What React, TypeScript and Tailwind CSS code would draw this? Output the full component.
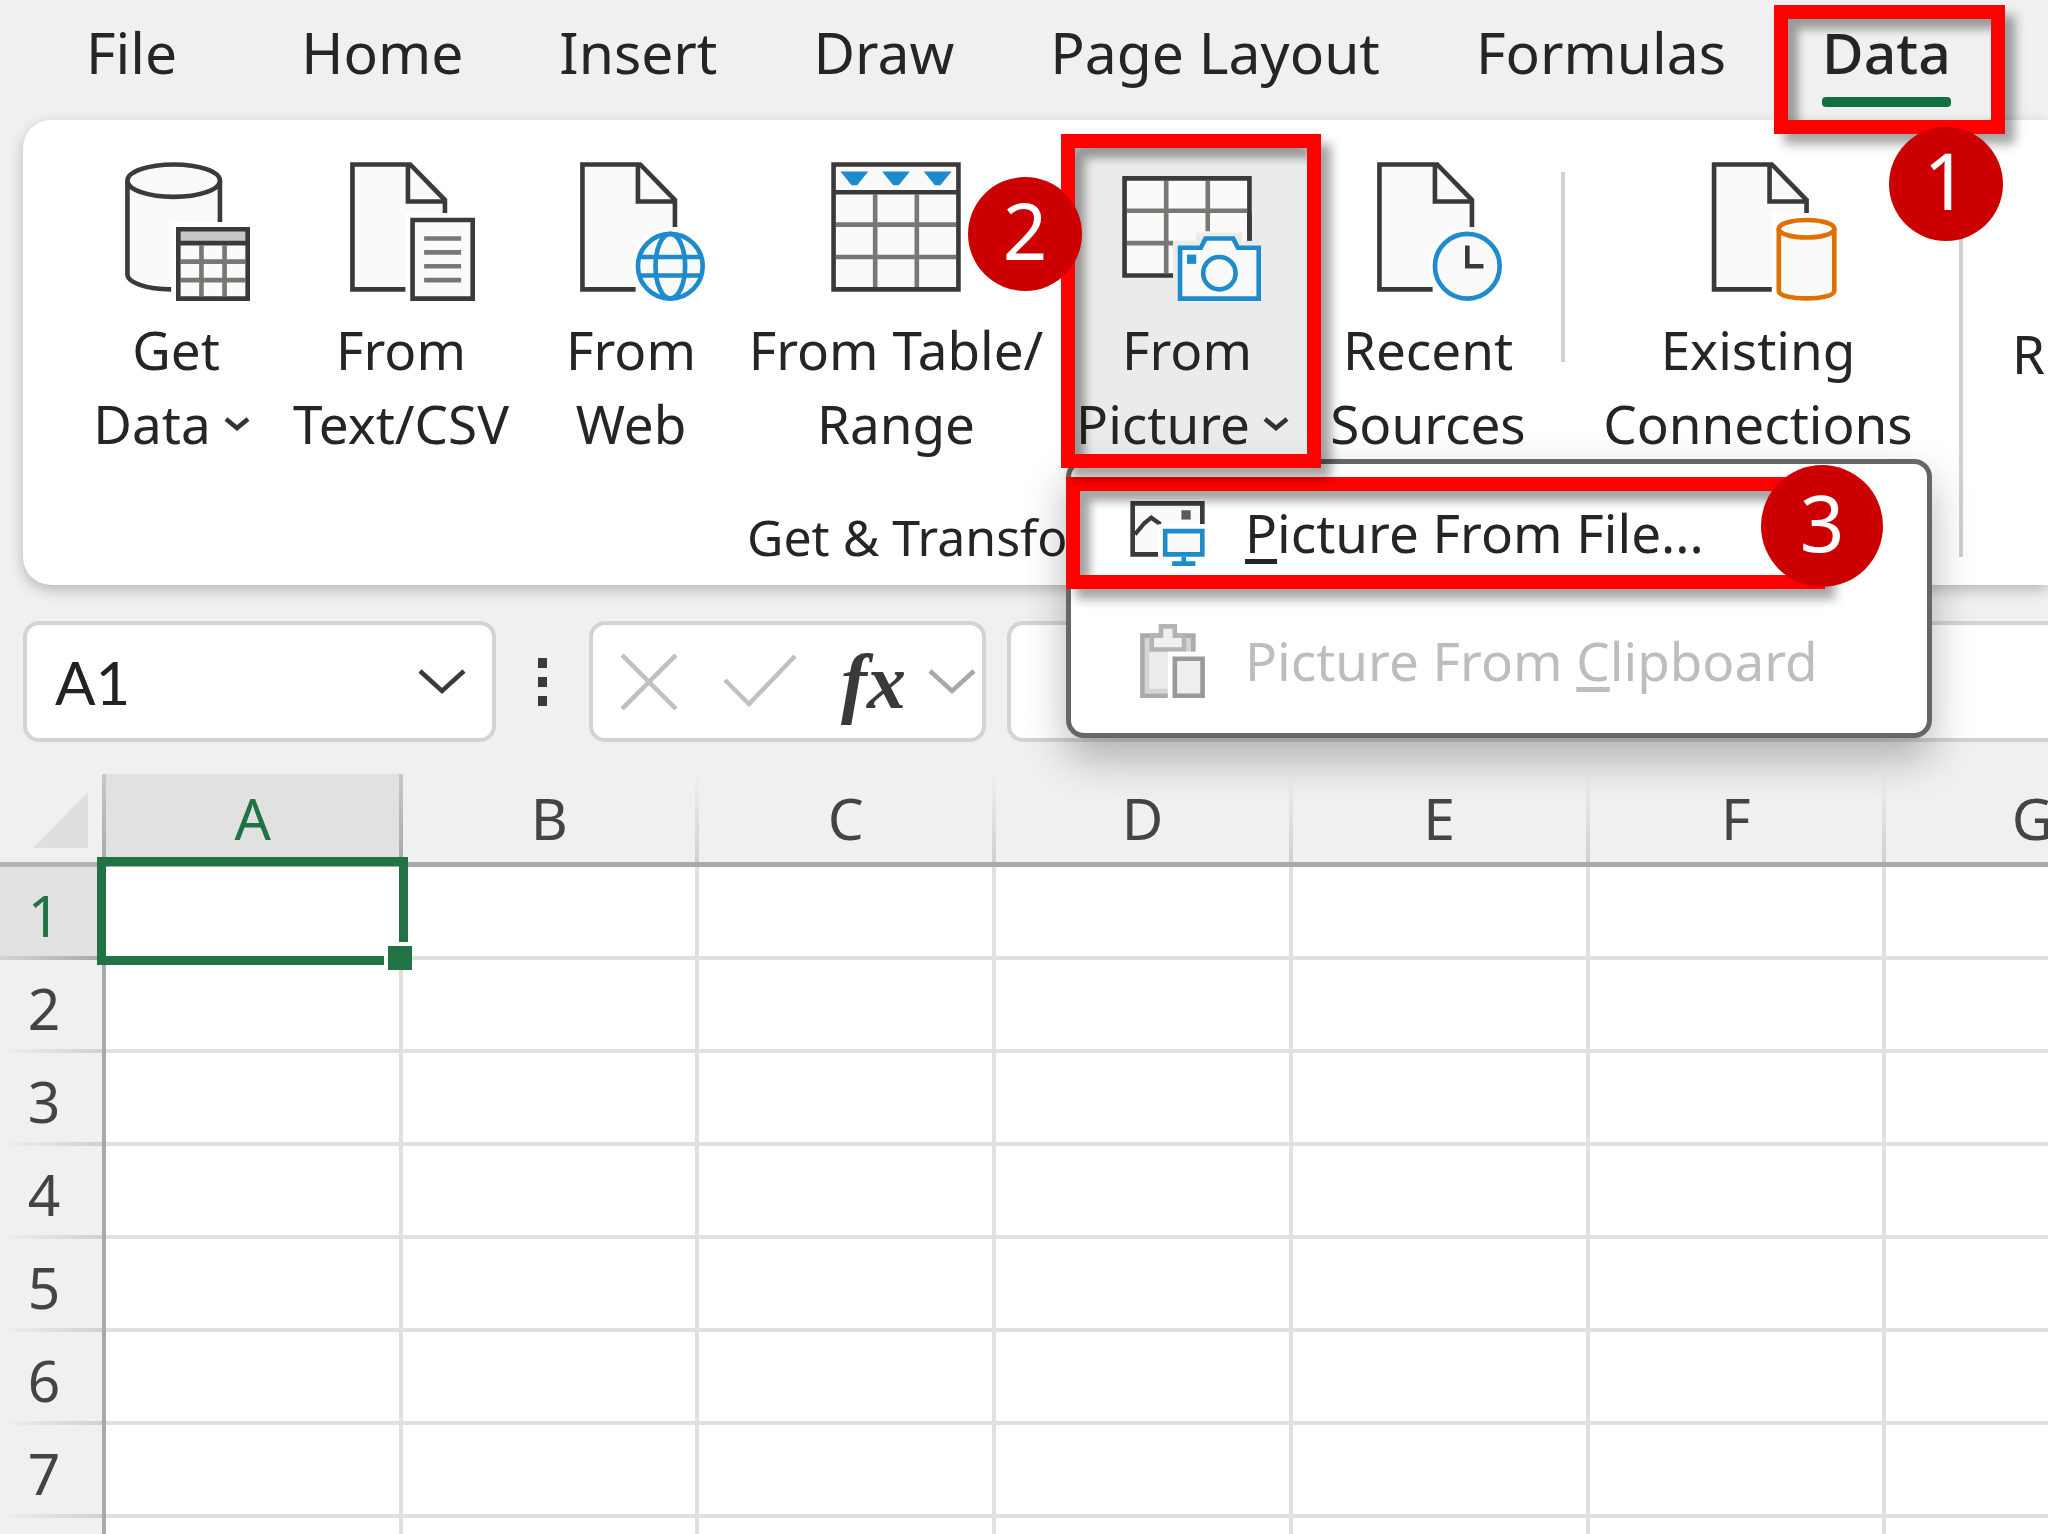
import type { ReactNode } from "react";

const INK = "#3b3a38";
const SOFT = "#797774";
const PAPER = "#fafafa";
const BLUE = "#1e8bcd";
const ORANGE = "#e07000";

function RibbonIcon({ children, viewBox = "0 0 32 30" }: { children?: ReactNode; viewBox?: string }) {
  return (
    <svg
      viewBox={viewBox}
      className="h-[139px] w-[148px] shrink-0 overflow-visible"
      fill="none"
      aria-hidden="true"
    >
      {children}
    </svg>
  );
}

function Sheet({ cutX, cutY }: { cutX: number; cutY: number }) {
  return (
    <>
      <path d="M5.5 .5H18L25.5 8.5V27.5H5.5Z" fill={PAPER} />
      <path d={`M${cutX} 27.5H5.5V.5H18L25.5 8.2V${cutY}`} stroke={INK} />
      <path d="M17.5 .5V8.5H25.5" stroke={INK} />
    </>
  );
}

function GetDataIcon() {
  return (
    <RibbonIcon>
      <path d="M5.5 4V24.5C5.5 26.2 10 27.5 15 27.5H25.5V4Z" fill={PAPER} />
      <path d="M5.5 4V24.3C5.5 26 9.5 27.5 15 27.5M25.5 4V13" stroke={INK} />
      <ellipse cx="15.5" cy="4" rx="10" ry="3.5" fill={PAPER} stroke={INK} />
      <path d="M15 13H32V30H15Z" fill="#fff" />
      <path d="M16.5 14.5H31.5V29.5H16.5Z" fill={PAPER} />
      <path d="M16.5 14.5H31.5V17.5H16.5Z" fill="#c8c6c4" />
      <path d="M21.5 18V29M26.5 18V29M17 21.5H31M17 25.5H31" stroke={SOFT} />
      <path d="M16.5 14.5H31.5V29.5H16.5ZM16.5 17.5H31.5" stroke={INK} />
    </RibbonIcon>
  );
}

function TextCsvIcon() {
  return (
    <RibbonIcon>
      <Sheet cutX={17} cutY={11} />
      <path d="M17 11H32V30H17Z" fill="#fff" />
      <path d="M18.5 12.5H31.5V29.5H18.5Z" fill={PAPER} stroke={INK} />
      <path d="M21 16.5H29M21 19.5H29M21 22.5H29M21 25.5H29" stroke={SOFT} />
    </RibbonIcon>
  );
}

function WebIcon() {
  return (
    <RibbonIcon>
      <Sheet cutX={17} cutY={14} />
      <circle cx="24.5" cy="22.5" r="8.3" fill="#fff" />
      <circle cx="24.5" cy="22.5" r="7" fill={PAPER} stroke={BLUE} />
      <ellipse cx="24.5" cy="22.5" rx="3.2" ry="7" stroke={BLUE} />
      <path d="M18 20.5H31M18 24.5H31" stroke={BLUE} />
    </RibbonIcon>
  );
}

function TableIcon() {
  return (
    <RibbonIcon>
      <path d="M2.5 .5H29.5V27.5H2.5Z" fill={PAPER} />
      <path d="M11.5 7V27M20.5 7V27M3 13.5H29M3 20.5H29" stroke={SOFT} />
      <path d="M2.5 .5H29.5V27.5H2.5ZM2.5 6.5H29.5" stroke={INK} />
      <path d="M4 2H10L7.6 5H6.4ZM13 2H19L16.6 5H15.4ZM22 2H28L25.6 5H24.4Z" fill={BLUE} />
    </RibbonIcon>
  );
}

function PictureIcon() {
  return (
    <RibbonIcon viewBox="-1 0 32 30">
      <path d="M1.5 3.5H28.5V24.5H1.5Z" fill={PAPER} />
      <path d="M10.5 4V24M19.5 4V15M2 10.5H28M2 17.5H12" stroke={SOFT} />
      <path d="M12 24.5H1.5V3.5H28.5V17" stroke={INK} />
      <path d="M12 17H17V15.2H27V17H31V30H12Z" fill="#ebebeb" />
      <path d="M17 15.2H27V17H28V12H20V15H17Z" fill={PAPER} />
      <path d="M28.5 11V17" stroke={INK} />
      <path d="M13.5 18.5H18L19 16.5H25L26 18.5H30.5V29.5H13.5Z" fill={PAPER} stroke={BLUE} />
      <circle cx="22" cy="24" r="3.5" stroke={BLUE} />
      <path d="M15 20H17V22H15Z" fill={BLUE} />
    </RibbonIcon>
  );
}

function RecentIcon() {
  return (
    <RibbonIcon>
      <Sheet cutX={17} cutY={14} />
      <circle cx="24.5" cy="22.5" r="8.3" fill="#fff" />
      <circle cx="24.5" cy="22.5" r="7" fill={PAPER} stroke={BLUE} />
      <path d="M24.5 18V22.5H28" stroke={INK} />
    </RibbonIcon>
  );
}

function ConnectionsIcon() {
  return (
    <RibbonIcon viewBox="-1 0 32 30">
      <Sheet cutX={18} cutY={11} />
      <path d="M18 11H32V30H18Z" fill="#fff" />
      <path d="M19.5 14.3V27.8C19.5 30 31.5 30 31.5 27.8V14.3" fill={PAPER} stroke={ORANGE} />
      <ellipse cx="25.5" cy="14.4" rx="6" ry="1.9" fill="#fff" stroke={ORANGE} />
    </RibbonIcon>
  );
}

function FileMenuIcon() {
  return (
    <svg viewBox="0 0 16 14" className="h-[65px] w-[75px] shrink-0" fill="none" aria-hidden="true">
      <path d="M.5 .5H15.5V11.5H.5Z" fill={PAPER} />
      <path d="M6 11.5H.5V.5H15.5V5" stroke={INK} />
      <path d="M1 7.2L3 4.8L4.5 3.6L6.5 5" stroke={INK} strokeWidth=".9" />
      <path d="M11 2H13V4H11Z" fill="#5a5a5a" />
      <path d="M6 5H16V12H6Z" fill="#fff" />
      <path d="M7.5 6.5H15.5V11.5H7.5Z" fill={PAPER} stroke={BLUE} />
      <path d="M11.5 12V13.5M9 13.5H14" stroke={BLUE} />
    </svg>
  );
}

function ClipboardMenuIcon() {
  return (
    <svg viewBox="0 0 14 16" className="h-[74px] w-[65px] shrink-0" fill="none" aria-hidden="true">
      <path d="M.5 2.5H11.5V15.5H.5Z" fill="#ececec" />
      <path d="M1.5 3V14.5H6M10.5 3V6" stroke="#d4d4d4" />
      <path d="M6 15.5H.5V2.5H11.5V6" stroke="#ababab" />
      <path d="M2.5 2.5H4.5V.5H7.5V2.5H9.5V5.5H2.5Z" fill="#f0f0f0" stroke="#b4b4b4" />
      <path d="M6 6H14V16H6Z" fill="#fff" />
      <path d="M7.5 7.5H13.5V15.5H7.5Z" fill="#eeeeee" stroke="#999999" />
    </svg>
  );
}

function SmallCaret() {
  return (
    <svg viewBox="0 0 28 16" className="mr-2 h-4 w-7 shrink-0" fill="none" aria-hidden="true">
      <path d="M3 3L14 12L25 3" stroke="#333" strokeWidth="4.5" />
    </svg>
  );
}

function Caret({ color }: { color: string }) {
  return (
    <svg viewBox="0 0 50 26" className="h-[26px] w-[50px] shrink-0" fill="none" aria-hidden="true">
      <path d="M3 2L25 22L47 2" stroke={color} strokeWidth="4.5" />
    </svg>
  );
}

const BOX =
  "pointer-events-none absolute border-14 border-[#ff0000] shadow-[10px_10px_10px_rgba(0,0,0,0.36),inset_10px_10px_10px_rgba(0,0,0,0.36)]";
const BADGE =
  "pointer-events-none absolute flex items-center justify-center rounded-full bg-[#cc0000] pb-2 text-[78px] leading-none text-white";

function RibbonButton({
  icon,
  lines,
  caret,
  className,
}: {
  icon: ReactNode;
  lines: [string, string];
  caret?: boolean;
  className: string;
}) {
  return (
    <button
      type="button"
      className={`flex shrink-0 flex-col items-center pt-[14px] text-[53px] leading-[74px] whitespace-nowrap ${className}`}
    >
      {icon}
      <span className="mt-3">{lines[0]}</span>
      <span className="flex items-center gap-3">
        {lines[1]}
        {caret && <SmallCaret />}
      </span>
    </button>
  );
}

function Tabs() {
  const tabs = ["File", "Home", "Insert", "Draw", "Page Layout", "Formulas"];
  return (
    <nav className="relative z-30 flex h-[120px] items-start pt-[13px] pl-[38px] text-[57px] leading-[78px] whitespace-nowrap">
      {tabs.map((t) => (
        <button key={t} type="button" className="shrink-0 px-12 first:mr-7">
          {t}
        </button>
      ))}
      <button type="button" aria-current="page" className="relative shrink-0 px-12">
        <span className="font-medium">Data</span>
        <span className="absolute inset-x-12 top-[84px] h-[10px] rounded-sm bg-[#107040]" />
        <span className={`${BOX} -top-2 -right-[6px] left-0 h-[129px]`} />
        <span className={`${BADGE} top-[114px] -right-1 size-[114px]`}>1</span>
      </button>
    </nav>
  );
}

function PictureMenu() {
  return (
    <div className="absolute top-[311px] -left-[9px] w-[866px] rounded-[18px] border-[5px] border-[#666] bg-white pb-5 text-[53px] leading-[74px] whitespace-nowrap shadow-[0_20px_44px_rgba(0,0,0,0.28)]">
      <div className="relative mt-[13px]">
        <button type="button" className="flex h-28 w-full items-center gap-10 pl-[59px]">
          <FileMenuIcon />
          <span>
            <span className="underline decoration-[5px] underline-offset-[6px]">P</span>icture From File...
          </span>
        </button>
        <span className={`${BOX} -inset-y-0 right-[102px] -left-[5px]`} />
        <span className={`${BADGE} -top-3 right-11 size-[122px]`}>3</span>
      </div>
      <button type="button" disabled className="mt-5 flex h-[104px] w-full items-center gap-10 pl-[69px] text-[#bdbdbd]">
        <ClipboardMenuIcon />
        <span>
          Picture From{" "}
          <span className="underline decoration-[5px] underline-offset-[6px] [text-decoration-skip-ink:none]">C</span>
          lipboard
        </span>
      </button>
    </div>
  );
}

function Ribbon() {
  return (
    <section className="relative z-20 ml-[23px] flex rounded-l-[28px] bg-white pt-7 pb-[14px] pl-[53px] shadow-[0_5px_14px_rgba(0,0,0,0.24)]">
      <div className="flex shrink-0 flex-col">
        <div className="flex">
          <RibbonButton icon={<GetDataIcon />} lines={["Get", "Data"]} caret className="w-[200px]" />
          <RibbonButton icon={<TextCsvIcon />} lines={["From", "Text/CSV"]} className="w-[250px]" />
          <RibbonButton icon={<WebIcon />} lines={["From", "Web"]} className="w-[210px]" />
          <RibbonButton icon={<TableIcon />} lines={["From Table/", "Range"]} className="w-[320px]" />
          <div className="relative z-10 ml-[19px] shrink-0">
            <RibbonButton
              icon={<PictureIcon />}
              lines={["From", "Picture"]}
              caret
              className="w-[232px] rounded-xl bg-[#ebebeb] pr-2"
            />
            <PictureMenu />
            <span className={`${BOX} -inset-x-[14px] -top-[14px] -bottom-[7px]`} />
            <span className={`${BADGE} top-[29px] -left-[107px] size-[114px]`}>2</span>
          </div>
          <RibbonButton icon={<RecentIcon />} lines={["Recent", "Sources"]} className="w-[242px]" />
          <span className="mt-6 ml-3 h-[190px] w-1 shrink-0 bg-[#d0d0d0]" />
          <RibbonButton icon={<ConnectionsIcon />} lines={["Existing", "Connections"]} className="w-[386px]" />
        </div>
        <span className="mt-[42px] pl-[671px] text-[50px] leading-[68px] whitespace-nowrap">
          Get &amp; Transform Data
        </span>
      </div>
      <span className="mt-6 mb-[14px] ml-2 w-1 shrink-0 bg-[#d0d0d0]" />
      <RibbonButton icon={<RibbonIcon />} lines={["Refresh", "All"]} caret className="mt-1 ml-10 w-[208px]" />
    </section>
  );
}

const FIELD = "flex h-[121px] shrink-0 items-center rounded-2xl border-4 border-[#d3d3d3] bg-white";

function FormulaBar() {
  return (
    <div className="mt-9 flex items-center pl-[23px]">
      <div className={`${FIELD} w-[473px] pr-[25px] pl-7`}>
        <input
          aria-label="Name box"
          defaultValue="A1"
          className="w-0 flex-1 bg-transparent font-[Lato] text-[60px] leading-none text-[#222] outline-none"
        />
        <button type="button" aria-label="Name list">
          <Caret color="#3b3a38" />
        </button>
      </div>
      <span className="mx-[42px] flex flex-col gap-[9px]">
        <i className="h-[10px] w-[9px] bg-[#3b3a38]" />
        <i className="h-[10px] w-[9px] bg-[#3b3a38]" />
        <i className="h-[10px] w-[9px] bg-[#3b3a38]" />
      </span>
      <div className={`${FIELD} w-[397px] pl-7`}>
        <button type="button" aria-label="Cancel">
          <svg viewBox="0 0 56 56" className="size-14" fill="none">
            <path d="M1 1L55 55M55 1L1 55" stroke="#c0c0c0" strokeWidth="4.5" />
          </svg>
        </button>
        <button type="button" aria-label="Enter" className="ml-[46px]">
          <svg viewBox="0 0 74 56" className="h-14 w-[74px]" fill="none">
            <path d="M2 26L26 50L72 2" stroke="#c0c0c0" strokeWidth="4.5" />
          </svg>
        </button>
        <button
          type="button"
          className="ml-11 font-['Liberation_Serif'] text-[78px] leading-none font-bold text-[#3b3a38] italic"
        >
          fx
        </button>
        <button type="button" aria-label="Function list" className="ml-[21px]">
          <Caret color="#a8a8a8" />
        </button>
      </div>
      <input
        aria-label="Formula"
        className="ml-[21px] h-[121px] flex-1 rounded-l-2xl border-4 border-r-0 border-[#d3d3d3] bg-white px-6 text-[53px] outline-none"
      />
    </div>
  );
}

const COLUMNS = ["A", "B", "C", "D", "E", "F", "G"];
const ROWS = [1, 2, 3, 4, 5, 6, 7, 8];

function Grid() {
  return (
    <table className="mt-8 w-[2183px] table-fixed border-separate border-spacing-0 text-[57px] leading-none text-[#444]">
      <colgroup>
        <col className="w-[106px]" />
        {COLUMNS.map((c, i) => (
          <col key={c} className={i % 2 ? "w-[296px]" : "w-[297px]"} />
        ))}
      </colgroup>
      <thead>
        <tr className="h-[93px]">
          <th className="relative border-b-[5px] border-[#b4b4b4] p-0 pt-1">
            <svg viewBox="0 0 55 56" className="ml-[33px] h-14 w-[55px]" aria-hidden="true">
              <path d="M55 0V56H0Z" fill="#dedede" />
            </svg>
            <span className="absolute inset-y-0 right-0 w-1 bg-linear-to-b from-[#c8c8c8] to-[#a9a9a9]" />
          </th>
          {COLUMNS.map((c, i) => (
            <th
              key={c}
              scope="col"
              className={`relative border-b-[5px] border-[#a9a9a9] p-0 pr-1 font-normal ${i === 0 ? "bg-[#e1e1e1] text-[#217346]" : ""}`}
            >
              {c}
              <span
                className={`absolute inset-y-0 right-0 w-1 bg-linear-to-b ${i === 0 ? "from-[#c8c8c8] to-[#a9a9a9]" : "from-transparent to-[#d0d0d0]"}`}
              />
            </th>
          ))}
        </tr>
      </thead>
      <tbody>
        {ROWS.map((r) => (
          <tr key={r} className="h-[93px]">
            <th
              scope="row"
              className={`relative border-r-4 border-[#a9a9a9] p-0 pt-[3px] pr-[14px] font-normal ${r === 1 ? "bg-[#e1e1e1] text-[#217346]" : ""}`}
            >
              {r}
              <span
                className={`absolute inset-x-0 bottom-0 h-1 bg-linear-to-r ${r === 1 ? "from-[#d4d4d4] to-[#a9a9a9]" : "from-transparent to-[#d0d0d0]"}`}
              />
            </th>
            {COLUMNS.map((c) => (
              <td key={c} className="relative border-r-4 border-b-4 border-[#e0e0e0] bg-white p-0">
                {r === 1 && c === "A" && (
                  <span className="absolute -inset-x-[9px] -top-[10px] -bottom-[9px] z-10 border-9 border-[#217346]">
                    <span className="absolute -right-[13px] -bottom-[14px] size-7 border-t-4 border-l-4 border-white bg-[#217346]" />
                  </span>
                )}
              </td>
            ))}
          </tr>
        ))}
      </tbody>
    </table>
  );
}

export default function App() {
  return (
    <main className="h-screen overflow-hidden bg-[#f0f0f0] font-['Noto_Sans',sans-serif] text-[#252525]">
      <Tabs />
      <Ribbon />
      <FormulaBar />
      <Grid />
    </main>
  );
}
